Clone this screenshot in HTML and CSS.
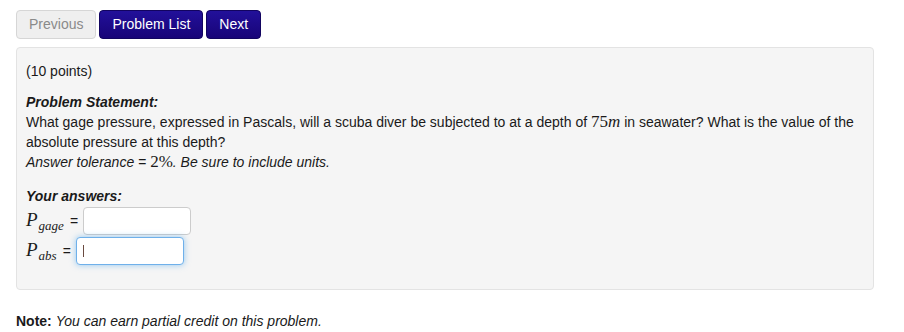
FILE: index.html
```html
<!DOCTYPE html>
<html lang="en">
<head>
  <meta charset="UTF-8">
  <title>Problem</title>
  <link rel="stylesheet" href="styles.css">
</head>
<body>
<div class="page">
  <!-- Navigation buttons -->
  <div class="nav-buttons">
    <a href="#" class="btn btn-disabled">Previous</a>
    <a href="#" class="btn btn-primary">Problem List</a>
    <a href="#" class="btn btn-primary">Next</a>
  </div>

  <!-- Problem panel -->
  <div class="problem">
    <p class="points">(10 points)</p>
    <div class="statement">
      <b><i>Problem Statement:</i></b><br>
      What gage pressure, expressed in Pascals, will a scuba diver be subjected to at a depth of <span class="math">75<i>m</i></span> in seawater? What is the value of the absolute pressure at this depth?<br>
      <i>Answer tolerance = <span class="math up">2%</span>. Be sure to include units.</i>
    </div>

    <div class="answers">
      <b><i>Your answers:</i></b>
      <div class="answer-row">
        <span class="math var"><i>P</i><sub>gage</sub></span>
        <span class="eq">=</span>
        <input type="text" class="answer-input">
      </div>
      <div class="answer-row">
        <span class="math var"><i>P</i><sub>abs</sub></span>
        <span class="eq">=</span>
        <span class="input-wrap">
          <input type="text" class="answer-input focused">
          <span class="caret"></span>
        </span>
      </div>
    </div>
  </div>

  <p class="note"><b>Note:</b> <i>You can earn partial credit on this problem.</i></p>
</div>
</body>
</html>
```

FILE: styles.css
```css
html, body {
  margin: 0;
  padding: 0;
  background-color: #fff;
  font-family: "Liberation Sans", Arial, sans-serif;
  font-size: 14px;
  line-height: 20px;
  color: #1a1a1a;
}

.page {
  padding: 10px 30px 0 16px;
}

/* Buttons */
.nav-buttons {
  display: flex;
  gap: 3px;
}

.btn {
  display: inline-block;
  padding: 4px 12px;
  line-height: 19px;
  font-size: 14px;
  border-radius: 4px;
  text-decoration: none;
  border: 1px solid #ccc;
}

.btn-disabled {
  background-color: #efefef;
  color: #8a8a8a;
  border-color: #d6d6d6;
}

.btn-primary {
  background-color: #1c0887;
  background-image: linear-gradient(#22109a, #180478);
  color: #fff;
  border-color: #120460;
}

/* Problem panel */
.problem {
  margin-top: 8px;
  background-color: #f5f5f5;
  border: 1px solid #e3e3e3;
  border-radius: 4px;
  padding: 13px 9px 23px 9px;
}

.points {
  margin: 0 0 11px 0;
}

.statement {
  margin-bottom: 14px;
}

.math {
  font-family: "Liberation Serif", "Times New Roman", serif;
  font-size: 17px;
  line-height: 1;
}

.math.up {
  font-style: normal;
}

.answers b {
  display: block;
  line-height: 20px;
}

.answer-row {
  display: flex;
  align-items: center;
  height: 30px;
}

.var {
  font-size: 19px;
}

.var sub {
  font-style: italic;
  font-size: 13px;
  vertical-align: -4px;
  margin-left: 1px;
}

.eq {
  margin: 0 5px 0 6px;
  font-size: 14px;
}

.input-wrap {
  position: relative;
  display: inline-block;
}

.answer-input {
  box-sizing: border-box;
  width: 108px;
  height: 28px;
  border: 1px solid #ccc;
  border-radius: 4px;
  background-color: #fff;
  padding: 4px 6px;
  font-size: 14px;
  outline: none;
  display: block;
}

.answer-input.focused {
  border-color: #6fb0ea;
  box-shadow: 0 0 6px rgba(82, 168, 236, 0.6);
}

.caret {
  position: absolute;
  left: 7px;
  top: 8px;
  width: 1px;
  height: 12px;
  background-color: #6a4a40;
}

.note {
  margin: 21px 0 0 0;
}
```
